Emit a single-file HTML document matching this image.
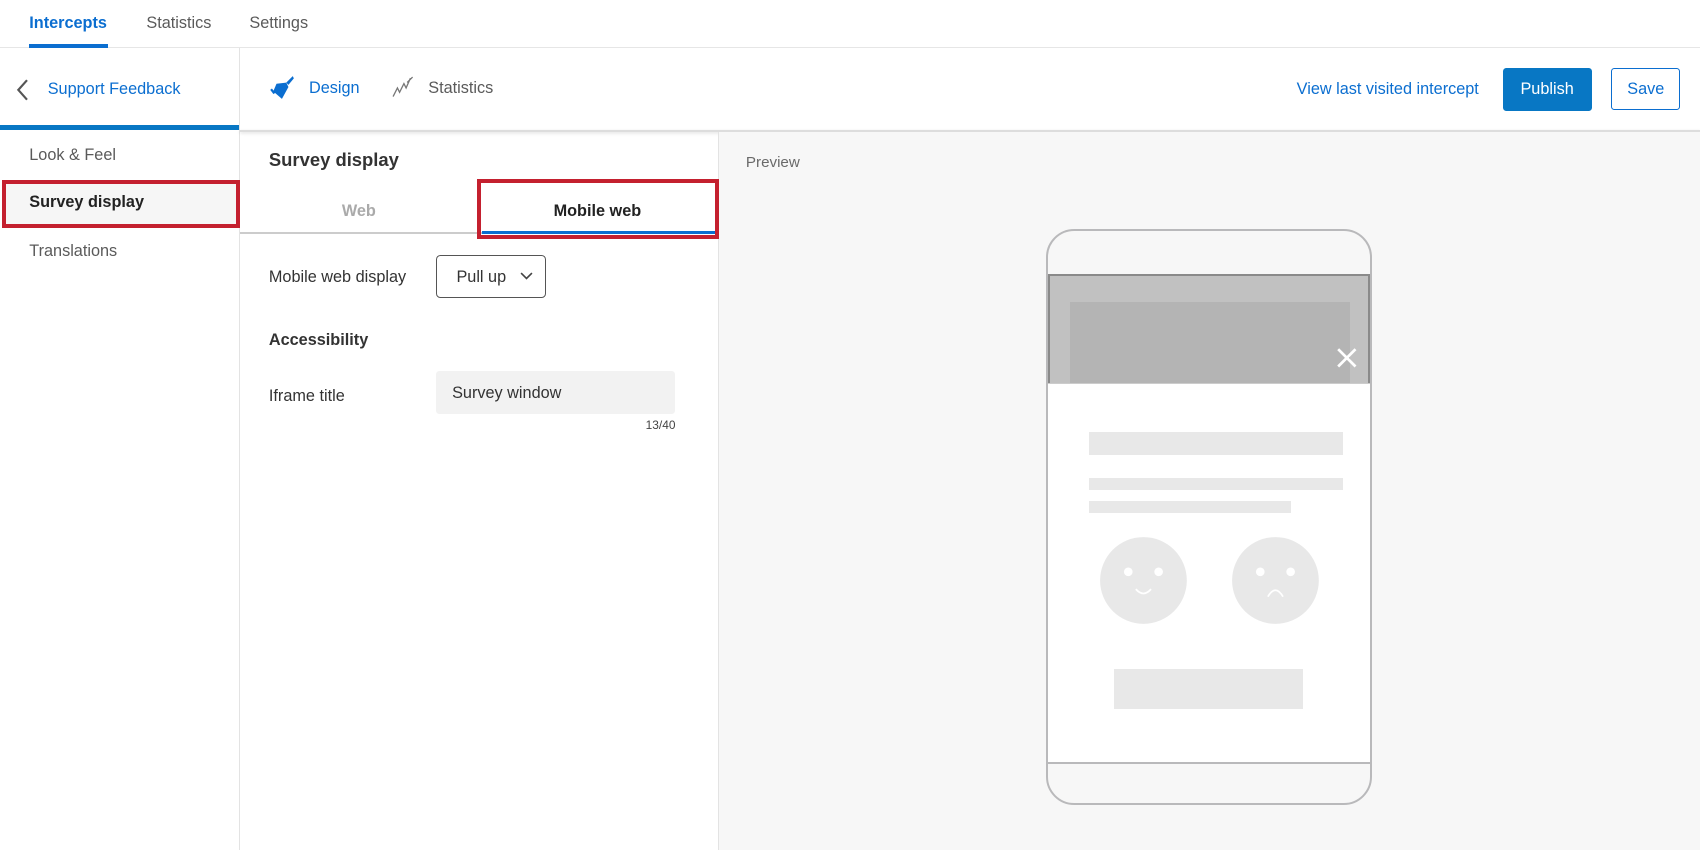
<!DOCTYPE html>
<html><head><meta charset="utf-8"><style>
html,body{margin:0;padding:0;background:#fff;overflow:hidden}
body{width:1568px;height:784px;zoom:1.08418;position:relative;font-family:"Liberation Sans",sans-serif;color:#333}
.a{position:absolute}
.t{position:absolute;white-space:nowrap;line-height:1}
</style></head><body>
<!-- top nav -->
<div class="a" style="left:0;top:43px;width:1568px;height:1px;background:#e6e6e6"></div>
<div class="t" style="left:27px;top:14px;font-size:15px;font-weight:bold;color:#0b6ed0">Intercepts</div>
<div class="a" style="left:27px;top:41px;width:73px;height:3px;background:#0b6ed0"></div>
<div class="t" style="left:135px;top:14px;font-size:15px;color:#5a5a5a">Statistics</div>
<div class="t" style="left:230px;top:14px;font-size:15px;color:#5a5a5a">Settings</div>

<!-- left sidebar -->
<div class="a" style="left:220px;top:44px;width:1px;height:740px;background:#e3e3e3"></div>
<svg class="a" style="left:13px;top:72px" width="16" height="22"><path d="M12 2 L4 11 L12 20" fill="none" stroke="#555" stroke-width="2"/></svg>
<div class="t" style="left:44px;top:75px;font-size:15px;color:#0b6ed0">Support Feedback</div>
<div class="a" style="left:0;top:115px;width:220px;height:5px;background:#0877c4"></div>
<div class="t" style="left:27px;top:136px;font-size:15px;color:#5a5a5a">Look &amp; Feel</div>
<div class="a" style="left:2px;top:166px;width:212px;height:37px;background:#f6f6f6;border:4px solid #c4202f"></div>
<div class="t" style="left:27px;top:179px;font-size:15px;font-weight:bold;color:#222">Survey display</div>
<div class="t" style="left:27px;top:224px;font-size:15px;color:#5a5a5a">Translations</div>

<!-- header row -->
<div class="a" style="left:221px;top:120px;width:1347px;height:2px;background:#ddd;box-shadow:0 1px 3px rgba(0,0,0,.15)"></div>
<svg class="a" style="left:249px;top:68px" width="24" height="26" viewBox="0 0 24 26"><path d="M15 8 L21 2 L22 4 L17 10Z" fill="#0b6ed0"/><path d="M6 9 L15 8 L17 12 L11 23 L3 16Z" fill="#0b6ed0"/><path d="M1 14 L4 18" stroke="#0b6ed0" stroke-width="2"/></svg>
<div class="t" style="left:285px;top:74px;font-size:15px;color:#0b6ed0">Design</div>
<svg class="a" style="left:362px;top:70px" width="22" height="20"><path d="M1 19 L5 11 L7 15 L11 7 L13 11 L17 2 M14 6 L19 1" fill="none" stroke="#777" stroke-width="1.2"/></svg>
<div class="t" style="left:395px;top:74px;font-size:15px;color:#5a5a5a">Statistics</div>
<div class="t" style="left:1196px;top:75px;font-size:15px;color:#0b6ed0">View last visited intercept</div>
<div class="a" style="left:1386px;top:63px;width:82px;height:39px;background:#0877c4;border-radius:3px"></div>
<div class="t" style="left:1386px;top:75px;width:82px;text-align:center;font-size:15px;color:#fff">Publish</div>
<div class="a" style="left:1486px;top:63px;width:62px;height:37px;border:1px solid #0b6ed0;border-radius:3px"></div>
<div class="t" style="left:1486px;top:75px;width:64px;text-align:center;font-size:15px;color:#0b6ed0">Save</div>

<!-- middle panel -->
<div class="a" style="left:662px;top:122px;width:1px;height:662px;background:#e3e3e3"></div>
<div class="t" style="left:248px;top:139px;font-size:17px;font-weight:bold;color:#333">Survey display</div>
<div class="a" style="left:221px;top:214px;width:441px;height:2px;background:#ccc"></div>
<div class="t" style="left:221px;top:187px;width:220px;text-align:center;font-size:15px;font-weight:bold;color:#aaa">Web</div>
<div class="a" style="left:445px;top:213px;width:215px;height:3px;background:#0b6ed0"></div>
<div class="a" style="left:440px;top:165px;width:216px;height:48px;border:4px solid #c4202f"></div>
<div class="t" style="left:445px;top:187px;width:212px;text-align:center;font-size:15px;font-weight:bold;color:#222">Mobile web</div>
<div class="t" style="left:248px;top:248px;font-size:15px;color:#333">Mobile web display</div>
<div class="a" style="left:402px;top:235px;width:100px;height:38px;border:1px solid #555;border-radius:4px"></div>
<div class="t" style="left:421px;top:248px;font-size:15px;color:#333">Pull up</div>
<svg class="a" style="left:480px;top:251px" width="12" height="8"><path d="M1 1 L6 6 L11 1" fill="none" stroke="#444" stroke-width="1.5"/></svg>
<div class="t" style="left:248px;top:306px;font-size:15px;font-weight:bold;color:#333">Accessibility</div>
<div class="t" style="left:248px;top:358px;font-size:15px;color:#333">Iframe title</div>
<div class="a" style="left:402px;top:342px;width:221px;height:40px;background:#f2f2f2;border-radius:3px"></div>
<div class="t" style="left:417px;top:355px;font-size:15px;color:#333">Survey window</div>
<div class="t" style="left:560px;top:387px;width:63px;text-align:right;font-size:11px;color:#444">13/40</div>

<!-- preview -->
<div class="a" style="left:663px;top:122px;width:905px;height:662px;background:#f7f7f7"></div>
<div class="t" style="left:688px;top:143px;font-size:14px;color:#6a6a6a">Preview</div>
<div class="a" style="left:965px;top:211px;width:297px;height:528px;border:2px solid #b9b9bb;border-radius:26px;background:#f7f7f7;overflow:hidden">
  <div class="a" style="left:0;top:40px;width:297px;height:450px;background:#fff"></div>
  <div class="a" style="left:0;top:40px;width:297px;height:100px;background:#c1c1c1;border-left:2px solid #8a8a8a;border-right:2px solid #8a8a8a;border-top:2px solid #8a8a8a;box-sizing:border-box"></div>
  <div class="a" style="left:20px;top:66px;width:258px;height:74px;background:#b4b4b4"></div>
  <svg class="a" style="left:265px;top:107px" width="20" height="20"><path d="M2 2 L18 18 M18 2 L2 18" stroke="#fff" stroke-width="2.5"/></svg>
  <div class="a" style="left:0;top:140px;width:297px;height:1px;background:#ccc"></div>
  <div class="a" style="left:38px;top:186px;width:234px;height:21px;background:#e8e8e8"></div>
  <div class="a" style="left:38px;top:228px;width:234px;height:11px;background:#e8e8e8"></div>
  <div class="a" style="left:38px;top:249px;width:186px;height:11px;background:#e8e8e8"></div>
  <svg class="a" style="left:47px;top:282px" width="82" height="82"><circle cx="41" cy="41" r="40" fill="#e8e8e8"/><circle cx="27" cy="33" r="4" fill="#fff"/><circle cx="55" cy="33" r="4" fill="#fff"/><path d="M34 49 Q41 57 48 49" fill="none" stroke="#fff" stroke-width="1.6"/></svg>
  <svg class="a" style="left:169px;top:282px" width="82" height="82"><circle cx="41" cy="41" r="40" fill="#e8e8e8"/><circle cx="27" cy="33" r="4" fill="#fff"/><circle cx="55" cy="33" r="4" fill="#fff"/><path d="M34 56 Q41 44 48 56" fill="none" stroke="#fff" stroke-width="1.6"/></svg>
  <div class="a" style="left:61px;top:404px;width:174px;height:37px;background:#e8e8e8"></div>
  <div class="a" style="left:0;top:490px;width:297px;height:2px;background:#b9b9bb"></div>
</div>
</body></html>
